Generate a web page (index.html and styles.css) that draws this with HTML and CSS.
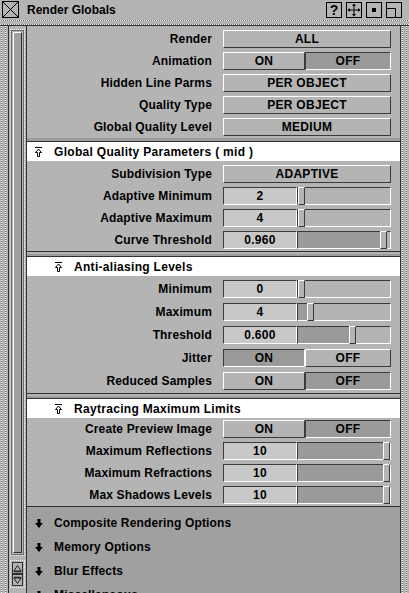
FILE: index.html
```html
<!DOCTYPE html>
<html>
<head>
<meta charset="utf-8">
<link rel="stylesheet" href="styles.css">
</head>
<body>
<div class="window">
  <div class="titlebar">
    <span class="closebox"><svg width="17" height="17" viewBox="0 0 17 17"><rect x="0.5" y="0.5" width="16" height="16" fill="none" stroke="#000"/><path d="M1 1 L16 16 M16 1 L1 16" stroke="#000" stroke-width="1"/></svg></span>
    <span class="title">Render Globals</span>
    <span class="tb-icons">
      <span class="tbtn q">?</span>
      <span class="tbtn"><svg width="14" height="14" viewBox="0 0 14 14"><path d="M7 1 V13 M1 7 H13" stroke="#000" fill="none"/><path d="M7 0.5 L5 3 H9 Z M7 13.5 L5 11 H9 Z M0.5 7 L3 5 V9 Z M13.5 7 L11 5 V9 Z" fill="#000"/></svg></span>
      <span class="tbtn"><svg width="14" height="14" viewBox="0 0 14 14"><rect x="5" y="5" width="4" height="4" fill="#000"/></svg></span>
      <span class="tbtn"><svg width="14" height="14" viewBox="0 0 14 14"><path d="M0 5.5 H8.5 V14" stroke="#000" fill="none"/></svg></span>
    </span>
  </div>
  <div class="frame-top"></div>
  <div class="main">
    <div class="frame-left"></div>
    <div class="scrollbar">
      <div class="sthumb"><div class="sthumb-in"></div></div>
      <div class="sarrows">
        <div class="sarrow"><svg width="11" height="9" viewBox="0 0 11 9"><path d="M5.5 1 L10 7.5 H1 Z M1 8.5 H10" stroke="#000" fill="none"/></svg></div>
        <div class="sarrow"><svg width="11" height="9" viewBox="0 0 11 9"><path d="M5.5 8 L10 1.5 H1 Z M1 0.5 H10" stroke="#000" fill="none"/></svg></div>
      </div>
    </div>
    <div class="content">
      <div class="sec sec1">
        <div class="row"><span class="label">Render</span><div class="ctl"><span class="btn">ALL</span></div></div>
        <div class="row"><span class="label">Animation</span><div class="ctl"><span class="btn half-on">ON</span><span class="btn half-off sel">OFF</span></div></div>
        <div class="row"><span class="label">Hidden Line Parms</span><div class="ctl"><span class="btn">PER OBJECT</span></div></div>
        <div class="row"><span class="label">Quality Type</span><div class="ctl"><span class="btn">PER OBJECT</span></div></div>
        <div class="row"><span class="label">Global Quality Level</span><div class="ctl"><span class="btn">MEDIUM</span></div></div>
      </div>
      <div class="div div-a"></div>
      <div class="hdr"><svg class="hicon" width="7" height="10" viewBox="0 0 7 10"><path d="M0 0.5 H7 M3.5 2 L6.5 5.5 H4.5 V9.5 H2.5 V5.5 H0.5 Z" stroke="#000" fill="none"/></svg><span class="htext">Global Quality Parameters ( mid )</span></div>
      <div class="sec sec2">
        <div class="row"><span class="label">Subdivision Type</span><div class="ctl"><span class="btn">ADAPTIVE</span></div></div>
        <div class="row"><span class="label">Adaptive Minimum</span><div class="ctl"><span class="val">2</span><span class="trough"><span class="thumb" style="left:0px"></span></span></div></div>
        <div class="row"><span class="label">Adaptive Maximum</span><div class="ctl"><span class="val">4</span><span class="trough"><span class="thumb" style="left:0px"></span></span></div></div>
        <div class="row"><span class="label">Curve Threshold</span><div class="ctl"><span class="val">0.960</span><span class="trough"><span class="fill" style="width:83px"></span><span class="thumb" style="left:82px"></span></span></div></div>
      </div>
      <div class="div div-b"></div>
      <div class="hdr sub"><svg class="hicon" width="7" height="10" viewBox="0 0 7 10"><path d="M0 0.5 H7 M3.5 2 L6.5 5.5 H4.5 V9.5 H2.5 V5.5 H0.5 Z" stroke="#000" fill="none"/></svg><span class="htext">Anti-aliasing Levels</span></div>
      <div class="sec sec3">
        <div class="row"><span class="label">Minimum</span><div class="ctl"><span class="val">0</span><span class="trough"><span class="thumb" style="left:0px"></span></span></div></div>
        <div class="row"><span class="label">Maximum</span><div class="ctl"><span class="val">4</span><span class="trough"><span class="fill" style="width:10px"></span><span class="thumb" style="left:9px"></span></span></div></div>
        <div class="row"><span class="label">Threshold</span><div class="ctl"><span class="val">0.600</span><span class="trough"><span class="fill" style="width:52px"></span><span class="thumb" style="left:51px"></span></span></div></div>
        <div class="row"><span class="label">Jitter</span><div class="ctl"><span class="btn half-on sel">ON</span><span class="btn half-off">OFF</span></div></div>
        <div class="row"><span class="label">Reduced Samples</span><div class="ctl"><span class="btn half-on">ON</span><span class="btn half-off sel">OFF</span></div></div>
      </div>
      <div class="div div-c"></div>
      <div class="hdr sub"><svg class="hicon" width="7" height="10" viewBox="0 0 7 10"><path d="M0 0.5 H7 M3.5 2 L6.5 5.5 H4.5 V9.5 H2.5 V5.5 H0.5 Z" stroke="#000" fill="none"/></svg><span class="htext">Raytracing Maximum Limits</span></div>
      <div class="sec sec4">
        <div class="row"><span class="label">Create Preview Image</span><div class="ctl"><span class="btn half-on">ON</span><span class="btn half-off sel">OFF</span></div></div>
        <div class="row"><span class="label">Maximum Reflections</span><div class="ctl"><span class="val">10</span><span class="trough"><span class="fill" style="width:86px"></span><span class="thumb" style="left:85px"></span></span></div></div>
        <div class="row"><span class="label">Maximum Refractions</span><div class="ctl"><span class="val">10</span><span class="trough"><span class="fill" style="width:86px"></span><span class="thumb" style="left:85px"></span></span></div></div>
        <div class="row"><span class="label">Max Shadows Levels</span><div class="ctl"><span class="val">10</span><span class="trough"><span class="fill" style="width:86px"></span><span class="thumb" style="left:85px"></span></span></div></div>
      </div>
      <div class="lower">
        <div class="citem"><svg class="cicon" width="8" height="9" viewBox="0 0 8 9"><path d="M2.5 0 H5.5 V4 H8 L4 9 L0 4 H2.5 Z" fill="#000"/></svg><span class="ctext">Composite Rendering Options</span></div>
        <div class="citem"><svg class="cicon" width="8" height="9" viewBox="0 0 8 9"><path d="M2.5 0 H5.5 V4 H8 L4 9 L0 4 H2.5 Z" fill="#000"/></svg><span class="ctext">Memory Options</span></div>
        <div class="citem"><svg class="cicon" width="8" height="9" viewBox="0 0 8 9"><path d="M2.5 0 H5.5 V4 H8 L4 9 L0 4 H2.5 Z" fill="#000"/></svg><span class="ctext">Blur Effects</span></div>
        <div class="citem"><svg class="cicon" width="8" height="9" viewBox="0 0 8 9"><path d="M2.5 0 H5.5 V4 H8 L4 9 L0 4 H2.5 Z" fill="#000"/></svg><span class="ctext">Miscellaneous</span></div>
      </div>
    </div>
    <div class="frame-right"></div>
  </div>
</div>
</body>
</html>
```
FILE: styles.css
```css
* { box-sizing: border-box; }
html, body { margin: 0; padding: 0; }
body {
  width: 409px;
  height: 593px;
  overflow: hidden;
  background: #b4b4b4;
  font-family: "Liberation Sans", Arial, sans-serif;
  font-weight: bold;
  font-size: 12px;
  color: #000;
}
.window { display: flex; flex-direction: column; height: 593px; }

.titlebar {
  height: 19px;
  display: flex;
  align-items: center;
  padding-left: 2px;
  background: #b4b4b4;
  flex: none;
}
.closebox { width: 17px; height: 17px; display: block; }
.closebox svg { display: block; }
.title { margin-left: 8px; font-size: 12px; }
.tb-icons { margin-left: auto; margin-right: 7px; display: flex; gap: 4px; }
.tbtn {
  width: 16px; height: 16px;
  border: 1px solid #000;
  display: flex; align-items: center; justify-content: center;
}
.tbtn.q { font-size: 14px; line-height: 1; }
.tbtn svg { display: block; }

.frame-top {
  height: 7px;
  flex: none;
  background-color: #b4b4b4;
  background-image:
    repeating-linear-gradient(to right, #f4f4f4 0 1px, #6c6c6c 1px 2px),
    repeating-linear-gradient(to right, #f4f4f4 0 1px, #6c6c6c 1px 2px);
  background-size: 100% 1px, 100% 1px;
  background-position: 0 1px, 0 5px;
  background-repeat: no-repeat;
  border-bottom: 1px solid #303030;
}

.main { flex: 1; display: flex; min-height: 0; }

.frame-left, .frame-right {
  width: 8px;
  flex: none;
  background-color: #b4b4b4;
  background-image:
    repeating-linear-gradient(to bottom, #f4f4f4 0 1px, #6c6c6c 1px 2px),
    repeating-linear-gradient(to bottom, #f4f4f4 0 1px, #6c6c6c 1px 2px);
  background-size: 1px 100%, 1px 100%;
  background-position: 1px 0, 5px 0;
  background-repeat: no-repeat;
}

.scrollbar {
  width: 19px;
  flex: none;
  border-right: 1px solid #303030;
  border-left: 1px solid #303030;
  background: #b4b4b4;
  display: flex;
  flex-direction: column;
  padding: 3px 1px 5px 1px;
}
.sthumb {
  flex: 1;
  margin: 0 0 4px 0;
  border: 1px dotted #f4f4f4;
  outline: 1px solid #6c6c6c;
  outline-offset: -2px;
  padding: 2px;
  display: flex;
}
.sthumb-in {
  flex: 1;
  background: #a0a0a0;
  border-left: 1px solid #fff;
  border-top: 1px solid #fff;
  border-right: 1px solid #303030;
  border-bottom: 1px solid #303030;
}
.sarrows { display: flex; flex-direction: column; border: 1px dotted #f4f4f4; padding: 1px; }
.sarrow {
  height: 12px;
  display: flex; align-items: center; justify-content: center;
  border: 1px solid #303030;
  background: #b4b4b4;
}
.sarrow svg { display: block; }

.content {
  width: 374px;
  flex: none;
  overflow: hidden;
  display: flex;
  flex-direction: column;
  border-right: 1px solid #303030;
  background: #b4b4b4;
}

.sec { display: flex; flex-direction: column; flex: none; }
.sec1 { padding-top: 2px; }
.sec2 { padding-top: 2px; }
.sec3 { padding-top: 1px; }
.sec4 { padding-top: 0; }

.row { display: flex; align-items: center; height: 22px; flex: none; }
.sec3 .row { height: 23px; }
.label { width: 185px; text-align: right; white-space: nowrap; letter-spacing: 0.15px; }
.ctl { margin-left: 11px; width: 168px; height: 18px; display: flex; }

.btn {
  flex: 1;
  background: #b4b4b4;
  border-top: 1px solid #fff;
  border-left: 1px solid #fff;
  border-bottom: 1px solid #3a3a3a;
  border-right: 1px solid #3a3a3a;
  display: flex; align-items: center; justify-content: center;
  letter-spacing: 0.3px;
}
.btn.half-on { flex: none; width: 82px; }
.btn.half-off { flex: none; width: 86px; }
.btn.sel {
  background: #9a9a9a;
  border-color: #3a3a3a #fff #fff #3a3a3a;
}

.val {
  width: 74px;
  flex: none;
  background: #c8c8c8;
  border-top: 1px solid #3a3a3a;
  border-left: 1px solid #3a3a3a;
  border-bottom: 1px solid #fff;
  border-right: 1px solid #fff;
  display: flex; align-items: center; justify-content: center;
  letter-spacing: 0.3px;
}
.trough {
  flex: 1;
  position: relative;
  background: #b4b4b4;
  border-top: 1px solid #3a3a3a;
  border-left: 1px solid #3a3a3a;
  border-bottom: 1px solid #fff;
  border-right: 1px solid #fff;
}
.fill { position: absolute; left: 0; top: 0; bottom: 0; background: #9a9a9a; }
.thumb {
  position: absolute;
  top: -1px; bottom: -1px;
  width: 7px;
  background: #b4b4b4;
  border-top: 1px solid #fff;
  border-left: 1px solid #fff;
  border-bottom: 1px solid #3a3a3a;
  border-right: 1px solid #3a3a3a;
}

.div { flex: none; }
.div-a {
  height: 4px;
  background: linear-gradient(#9c9c9c 0 3px, #303030 3px 4px);
}
.div-b, .div-c {
  height: 6px;
  background: linear-gradient(#303030 0 1px, #b4b4b4 1px 3px, #9c9c9c 3px 5px, #303030 5px 6px);
}
.div-c { height: 7px; background: linear-gradient(#b4b4b4 0 1px, #303030 1px 2px, #b4b4b4 2px 4px, #9c9c9c 4px 6px, #303030 6px 7px); }

.hdr {
  height: 19px;
  flex: none;
  background: #fff;
  display: flex;
  align-items: center;
  padding-left: 8px;
}
.hdr.sub { padding-left: 28px; }
.hicon { display: block; flex: none; }
.htext { margin-left: 12px; letter-spacing: 0.3px; }

.lower {
  flex: 1;
  background: #a0a0a0;
  border-top: 1px solid #303030;
  padding-top: 4px;
  display: flex;
  flex-direction: column;
}
.citem { height: 24px; flex: none; display: flex; align-items: center; padding-left: 8px; }
.cicon { display: block; flex: none; }
.ctext { margin-left: 11px; letter-spacing: 0.15px; }
```
